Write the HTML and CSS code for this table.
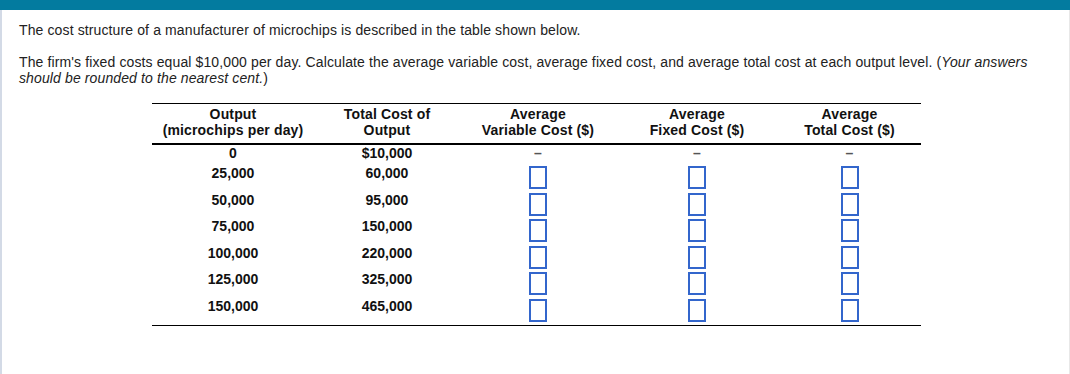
FILE: index.html
```html
<!DOCTYPE html>
<html lang="en">
<head>
<meta charset="utf-8">
<title>Cost structure</title>
<link rel="stylesheet" href="styles.css">
</head>
<body>
<div class="topbar"></div>
<main class="content">
  <p class="intro">The cost structure of a manufacturer of microchips is described in the table shown below.</p>
  <p class="task">The firm's fixed costs equal $10,000 per day. Calculate the average variable cost, average fixed cost, and average total cost at each output level. (<i>Your answers should be rounded to the nearest cent.</i>)</p>
  <div class="cost-table">
    <div class="row head">
      <div class="cell">Output<br>(microchips per day)</div>
      <div class="cell">Total Cost of<br>Output</div>
      <div class="cell">Average<br>Variable Cost ($)</div>
      <div class="cell">Average<br>Fixed Cost ($)</div>
      <div class="cell">Average<br>Total Cost ($)</div>
    </div>
    <div class="row first">
      <div class="cell">0</div>
      <div class="cell">$10,000</div>
      <div class="cell dash">–</div>
      <div class="cell dash">–</div>
      <div class="cell dash">–</div>
    </div>
    <div class="row">
      <div class="cell">25,000</div><div class="cell">60,000</div>
      <div class="cell box-cell"><span class="box"></span></div>
      <div class="cell box-cell"><span class="box"></span></div>
      <div class="cell box-cell"><span class="box"></span></div>
    </div>
    <div class="row">
      <div class="cell">50,000</div><div class="cell">95,000</div>
      <div class="cell box-cell"><span class="box"></span></div>
      <div class="cell box-cell"><span class="box"></span></div>
      <div class="cell box-cell"><span class="box"></span></div>
    </div>
    <div class="row">
      <div class="cell">75,000</div><div class="cell">150,000</div>
      <div class="cell box-cell"><span class="box"></span></div>
      <div class="cell box-cell"><span class="box"></span></div>
      <div class="cell box-cell"><span class="box"></span></div>
    </div>
    <div class="row">
      <div class="cell">100,000</div><div class="cell">220,000</div>
      <div class="cell box-cell"><span class="box"></span></div>
      <div class="cell box-cell"><span class="box"></span></div>
      <div class="cell box-cell"><span class="box"></span></div>
    </div>
    <div class="row">
      <div class="cell">125,000</div><div class="cell">325,000</div>
      <div class="cell box-cell"><span class="box"></span></div>
      <div class="cell box-cell"><span class="box"></span></div>
      <div class="cell box-cell"><span class="box"></span></div>
    </div>
    <div class="row last">
      <div class="cell">150,000</div><div class="cell">465,000</div>
      <div class="cell box-cell"><span class="box"></span></div>
      <div class="cell box-cell"><span class="box"></span></div>
      <div class="cell box-cell"><span class="box"></span></div>
    </div>
  </div>
</main>
</body>
</html>
```
FILE: styles.css
```css
html, body {
  margin: 0;
  padding: 0;
  background: #fff;
}
body {
  font-family: "Liberation Sans", Arial, sans-serif;
  font-size: 14px;
  color: #222;
  height: 374px;
  overflow: hidden;
}
.topbar {
  height: 10px;
  background: #037b9f;
}
.content {
  box-sizing: border-box;
  height: 364px;
  border-left: 2px solid #d3dae6;
  border-right: 1px solid #e8e8e8;
  padding: 12px 17px 0 17px;
}
.intro, .task {
  margin: 0;
  line-height: 16px;
  letter-spacing: 0.12px;
}
.intro {
  margin-bottom: 16px;
}
.task i {
  font-style: italic;
}
.cost-table {
  margin: 17px 0 0 133px;
  width: 769px;
  border-top: 1px solid #000;
  border-bottom: 1px solid #000;
  padding-bottom: 2px;
  color: #111;
  font-weight: bold;
}
.row {
  display: grid;
  grid-template-columns: 162px 146px 156px 162px 143px;
  height: 26.6px;
}
.cell {
  text-align: center;
  line-height: 16px;
  padding-top: 2px;
}
.row.head {
  height: auto;
  border-bottom: 2px solid #000;
}
.row.head .cell {
  padding: 2px 0 5px;
  letter-spacing: 0.15px;
}
.row.first {
  height: 18px;
}
.row.first .cell {
  padding-top: 0;
}
.dash {
  color: #555;
}
.box-cell {
  padding-top: 3px;
}
.box {
  display: inline-block;
  box-sizing: border-box;
  width: 18px;
  height: 23px;
  border: 2px solid #3366cc;
  vertical-align: top;
}
```
